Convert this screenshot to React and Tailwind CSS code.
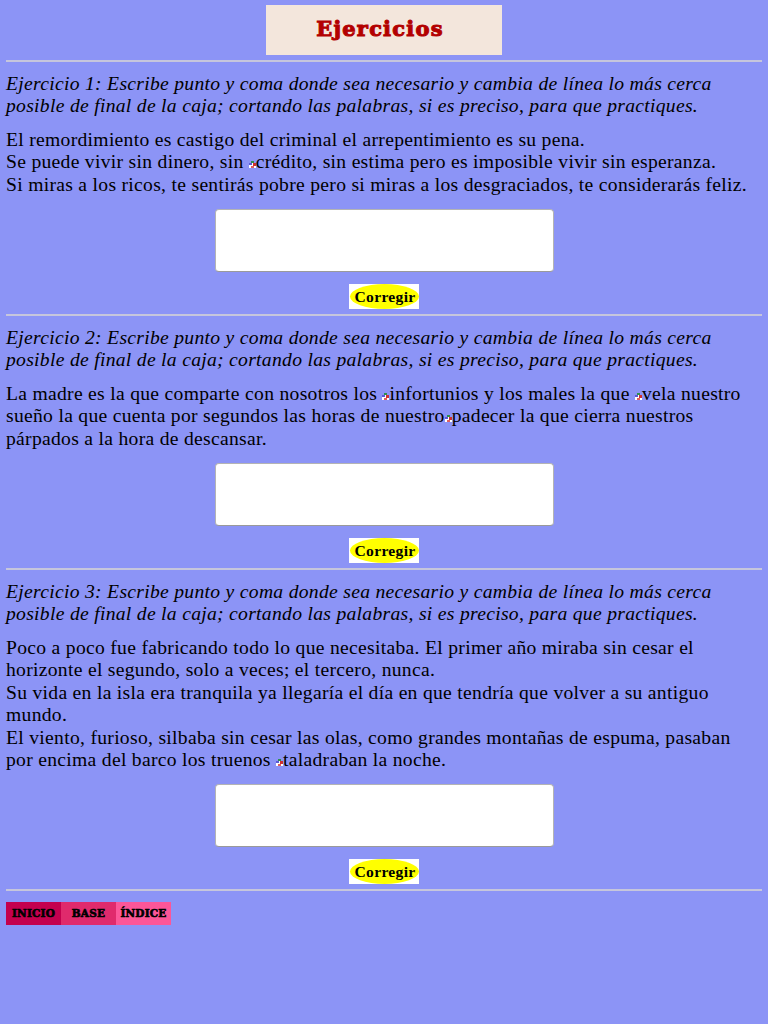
const Dot = () => (
  <svg width="7" height="7" viewBox="0 0 7 7" className="inline-block align-baseline">
    <rect x="0" y="2" width="7" height="5" fill="#ffffff" />
    <rect x="2" y="0" width="3" height="2" fill="#2f8f4f" />
    <rect x="0" y="2" width="3" height="2" fill="#5a5ad8" />
    <rect x="4" y="2" width="3" height="3" fill="#d03030" />
    <rect x="2" y="5" width="3" height="2" fill="#e06060" />
  </svg>
);

const instructions = (n) => (
  <p className="italic mb-[11px]">
    Ejercicio {n}: Escribe punto y coma donde sea necesario y cambia de línea lo más cerca posible de final de la caja; cortando las palabras, si es preciso, para que practiques.
  </p>
);

const Rule = () => <div className="h-[2px] bg-[#c6c6dc]" />;

const Exercise = ({ n, children }) => (
  <section>
    <div className="pt-[11px]">
      {instructions(n)}
      <div>{children}</div>
    </div>
    <div className="flex flex-col items-center pt-[13px] pb-[5px]">
      <div className="w-[339px] h-[63px] bg-white rounded-[4px] border border-[#b4b4b4] border-b-[#9a9a9a]" />
      <button className="mt-[12px] w-[70px] h-[25px] bg-white flex items-center justify-center">
        <span className="w-[69px] h-[25px] rounded-[50%] bg-[#ffff00] flex items-center justify-center pt-[1px] pl-[2px] text-[15.6px] leading-[20px] tracking-[0.3px] font-bold text-black">Corregir</span>
      </button>
    </div>
    <Rule />
  </section>
);

export default function App() {
  return (
    <div className="min-h-[1024px] bg-[#8c94f6] px-[6px] pt-[5px] text-black text-[19.6px] leading-[22.4px] tracking-[0.3px] font-['Liberation_Serif',serif]">
      <div className="flex justify-center pb-[5px]">
        <h1 className="w-[236px] h-[50px] bg-[#f3e6dc] flex items-center justify-center pr-[8px] pb-[2px] text-[21px] tracking-[1.2px] font-bold font-['DejaVu_Serif',serif] text-[#b30000] [-webkit-text-stroke:1px_#b30000]">Ejercicios</h1>
      </div>
      <Rule />

      <Exercise n={1}>
        <p>El remordimiento es castigo del criminal el arrepentimiento es su pena.</p>
        <p>Se puede vivir sin dinero, sin <Dot />crédito, sin estima pero es imposible vivir sin esperanza.</p>
        <p>Si miras a los ricos, te sentirás pobre pero si miras a los desgraciados, te considerarás feliz.</p>
      </Exercise>

      <Exercise n={2}>
        <p>La madre es la que comparte con nosotros los <Dot />infortunios y los males la que <Dot />vela nuestro sueño la que cuenta por segundos las horas de nuestro<Dot />padecer la que cierra nuestros párpados a la hora de descansar.</p>
      </Exercise>

      <Exercise n={3}>
        <p>Poco a poco fue fabricando todo lo que necesitaba. El primer año miraba sin cesar el horizonte el segundo, solo a veces; el tercero, nunca.</p>
        <p>Su vida en la isla era tranquila ya llegaría el día en que tendría que volver a su antiguo mundo.</p>
        <p>El viento, furioso, silbaba sin cesar las olas, como grandes montañas de espuma, pasaban por encima del barco los truenos <Dot />taladraban la noche.</p>
      </Exercise>

      <nav className="flex mt-[11px] text-[10.5px] leading-[23px] tracking-[0.2px] font-bold font-['DejaVu_Serif',serif] text-black text-center [-webkit-text-stroke:0.6px_#000000]">
        <a className="w-[55px] h-[23px] bg-[#c4004e]">INICIO</a>
        <a className="w-[55px] h-[23px] bg-[#e02a6c]">BASE</a>
        <a className="w-[55px] h-[23px] bg-[#fc5698]">ÍNDICE</a>
      </nav>
    </div>
  );
}
